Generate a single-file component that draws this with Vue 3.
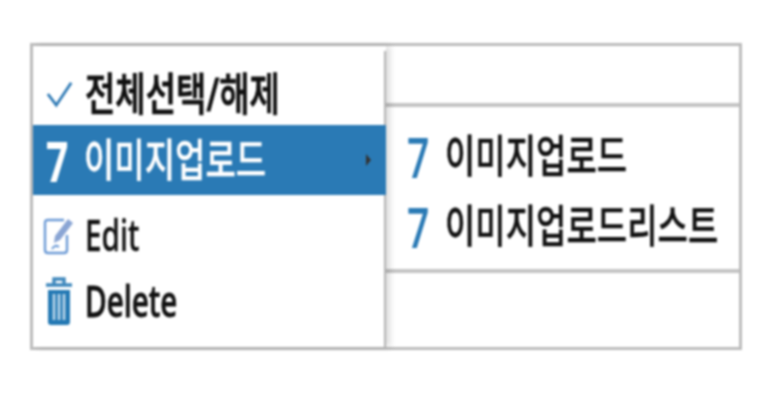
<script setup>
const subItems = ['이미지업로드', '이미지업로드리스트']
</script>

<template>
  <div class="page">
    <div class="frame">
      <div class="left">
        <div class="row check-row">
          <svg class="ico" viewBox="0 0 30 30" width="28" height="30">
            <path d="M2 15 L11 27 L27 3" fill="none" stroke="#2f7ab5" stroke-width="3" />
          </svg>
          <span class="label strong dark">전체선택/해제</span>
        </div>
        <div class="row selected">
          <span class="seven white bold">7</span>
          <span class="label white">이미지업로드</span>
          <span class="arrow"></span>
        </div>
        <div class="row edit-row">
          <svg class="ico" viewBox="0 0 30 40" width="30" height="40">
            <path d="M21 5 H5 Q2 5 2 8 V35 Q2 38 5 38 H21 Q24 38 24 35 V20" fill="none" stroke="#6d9bd6" stroke-width="2.4" />
            <path d="M11 28 L12 21 L25 4 L30 8 L17 25 Z" fill="#8aa5d4" />
            <path d="M9 34 Q12 29 16 32" fill="none" stroke="#6d9bd6" stroke-width="2" />
          </svg>
          <span class="label latin dark">Edit</span>
        </div>
        <div class="row delete-row">
          <svg class="ico" viewBox="0 0 26 50" width="26" height="50">
            <path d="M0 9 H26 M8 9 V3 H18 V9" fill="none" stroke="#3f88bd" stroke-width="3.4" />
            <path d="M2 14 H24 V46 Q24 49 21 49 H5 Q2 49 2 46 Z" fill="#2479b4" />
            <path d="M8 18 V44 M13 18 V44 M18 18 V44" stroke="#bcd7ea" stroke-width="2.6" />
          </svg>
          <span class="label latin strong dark">Delete</span>
        </div>
      </div>
      <div class="right">
        <div class="gap-top"></div>
        <div class="submenu">
          <div v-for="item in subItems" :key="item" class="sub-row">
            <span class="seven blue">7</span>
            <span class="label dark">{{ item }}</span>
          </div>
        </div>
        <div class="gap-bottom"></div>
      </div>
    </div>
  </div>
</template>

<style scoped>
.page {
  width: 768px;
  height: 402px;
  padding: 43px 0 0 30px;
  box-sizing: border-box;
  background: #fff;
  overflow: hidden;
}
.frame {
  width: 712px;
  height: 307px;
  box-sizing: border-box;
  border: 3px solid #bcbcbc;
  display: flex;
  filter: blur(0.9px);
  font-family: "Noto Sans", "Noto Sans CJK KR", sans-serif;
}
.left {
  width: 353px;
  flex: none;
  display: flex;
  flex-direction: column;
  box-shadow: 4px 0 6px rgba(0, 0, 0, 0.14);
  position: relative;
  z-index: 1;
  background: #fff;
}
.left::after {
  content: "";
  position: absolute;
  top: 5px;
  bottom: 0;
  right: 0;
  width: 2px;
  background: #b4b4b4;
}
.row {
  display: flex;
  align-items: center;
}
.check-row {
  height: 79px;
  box-sizing: border-box;
  padding: 16px 0 0 13px;
  gap: 11px;
}
.selected {
  height: 70px;
  background: #2a7ab5;
  padding-left: 13px;
  gap: 18px;
  position: relative;
  z-index: 2;
}
.edit-row {
  height: 80px;
  padding-left: 10px;
  gap: 12px;
}
.delete-row {
  height: 52px;
  padding-left: 13px;
  gap: 13px;
}
.ico { flex: none; }
.label {
  font-size: 33px;
  line-height: 40px;
  font-weight: 500;
  white-space: nowrap;
  display: inline-block;
  transform: scaleY(1.38);
  -webkit-text-stroke: 0.3px currentColor;
}
.strong { -webkit-text-stroke: 0.7px currentColor; }
.latin {
  transform: scale(0.9, 1.3);
  transform-origin: left center;
}
.dark { color: #111; }
.white { color: #fff; }
.blue { color: #2a7ab5; }
.seven {
  width: 20px;
  flex: none;
  font-size: 46px;
  line-height: 50px;
  font-family: "Open Sans", sans-serif;
  font-weight: 600;
  display: inline-block;
  transform: scale(0.85, 1.22);
  transform-origin: left center;
}
.bold { font-weight: 700; }
.arrow {
  position: absolute;
  right: 15px;
  top: 29px;
  border-left: 5px solid #333;
  border-top: 6px solid transparent;
  border-bottom: 6px solid transparent;
}
.right {
  flex: 1;
  display: flex;
  flex-direction: column;
}
.gap-top { height: 57px; flex: none; }
.submenu {
  height: 170px;
  flex: none;
  box-sizing: border-box;
  border-top: 4px solid #c4c4c4;
  border-bottom: 4px solid #c4c4c4;
  padding: 14px 0 0 21px;
  display: flex;
  flex-direction: column;
}
.sub-row {
  height: 70px;
  display: flex;
  align-items: center;
  gap: 18px;
}
</style>
